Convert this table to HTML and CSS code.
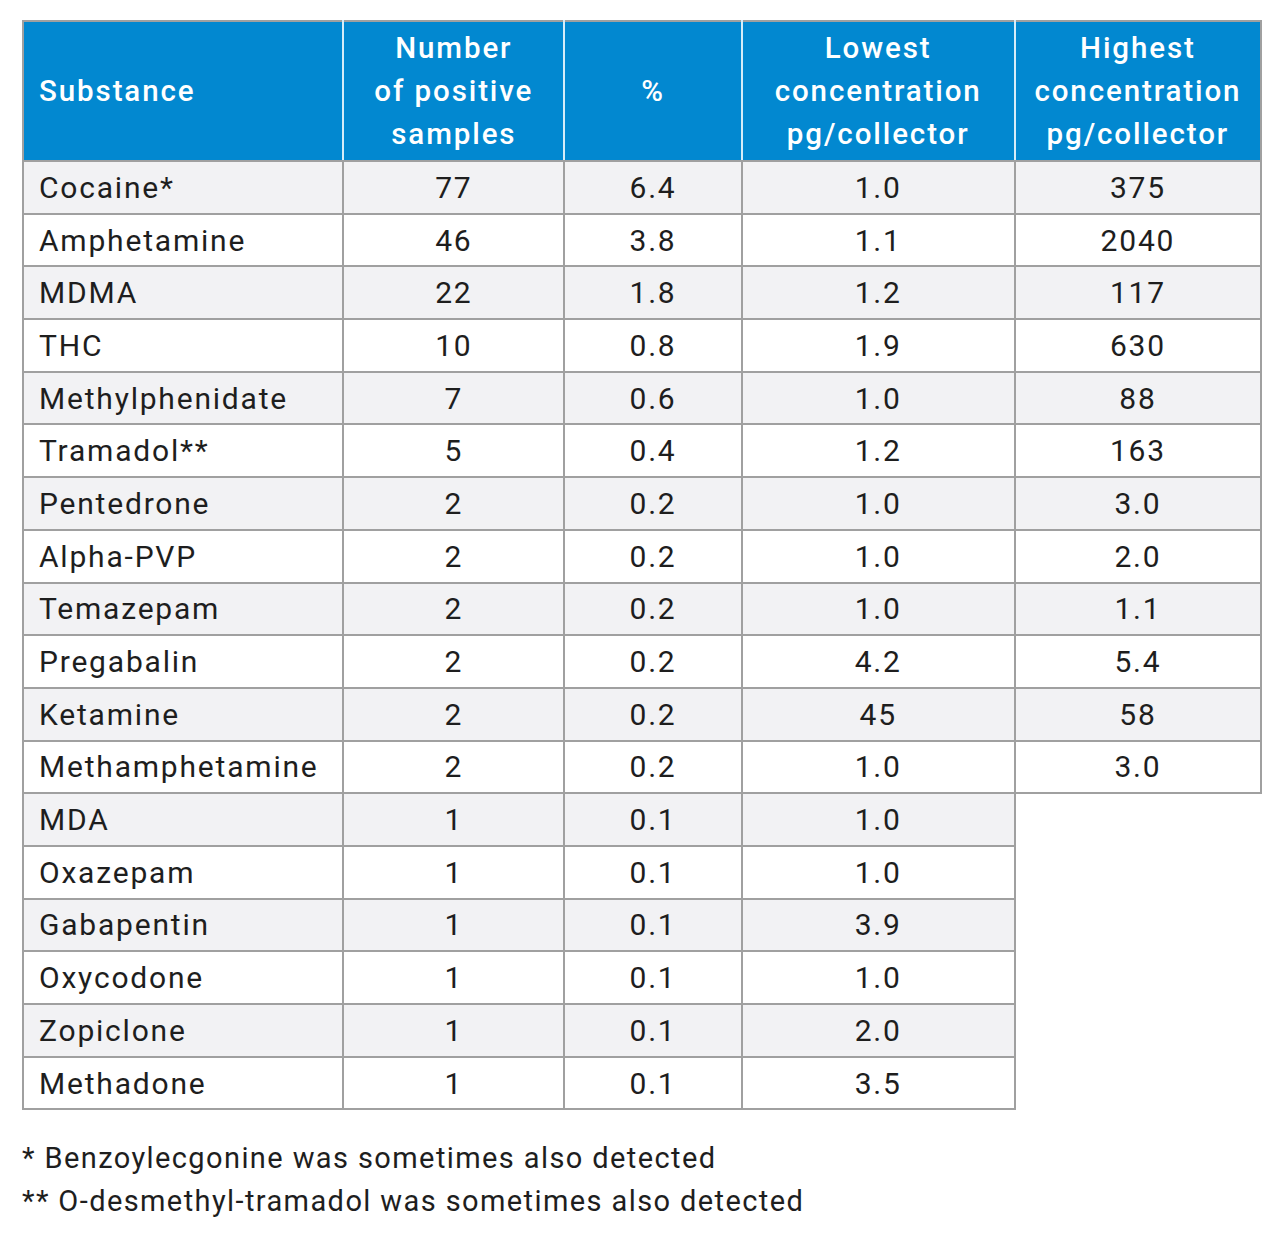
FILE: index.html
```html
<!DOCTYPE html>
<html>
<head>
<meta charset="utf-8">
<link rel="stylesheet" href="styles.css">
</head>
<body>
<div class="page">
<table class="data">
  <colgroup>
    <col class="c1"><col class="c2"><col class="c3"><col class="c4"><col class="c5">
  </colgroup>
  <thead>
    <tr>
      <th class="left">Substance</th>
      <th>Number<br>of positive<br>samples</th>
      <th>%</th>
      <th>Lowest<br>concentration<br>pg/collector</th>
      <th>Highest<br>concentration<br>pg/collector</th>
    </tr>
  </thead>
  <tbody>
    <tr class="odd"><td class="left">Cocaine*</td><td>77</td><td>6.4</td><td>1.0</td><td>375</td></tr>
    <tr><td class="left">Amphetamine</td><td>46</td><td>3.8</td><td>1.1</td><td>2040</td></tr>
    <tr class="odd"><td class="left">MDMA</td><td>22</td><td>1.8</td><td>1.2</td><td>117</td></tr>
    <tr><td class="left">THC</td><td>10</td><td>0.8</td><td>1.9</td><td>630</td></tr>
    <tr class="odd"><td class="left">Methylphenidate</td><td>7</td><td>0.6</td><td>1.0</td><td>88</td></tr>
    <tr><td class="left">Tramadol**</td><td>5</td><td>0.4</td><td>1.2</td><td>163</td></tr>
    <tr class="odd"><td class="left">Pentedrone</td><td>2</td><td>0.2</td><td>1.0</td><td>3.0</td></tr>
    <tr><td class="left">Alpha-PVP</td><td>2</td><td>0.2</td><td>1.0</td><td>2.0</td></tr>
    <tr class="odd"><td class="left">Temazepam</td><td>2</td><td>0.2</td><td>1.0</td><td>1.1</td></tr>
    <tr><td class="left">Pregabalin</td><td>2</td><td>0.2</td><td>4.2</td><td>5.4</td></tr>
    <tr class="odd"><td class="left">Ketamine</td><td>2</td><td>0.2</td><td>45</td><td>58</td></tr>
    <tr><td class="left">Methamphetamine</td><td>2</td><td>0.2</td><td>1.0</td><td>3.0</td></tr>
    <tr class="odd"><td class="left">MDA</td><td>1</td><td>0.1</td><td>1.0</td></tr>
    <tr><td class="left">Oxazepam</td><td>1</td><td>0.1</td><td>1.0</td></tr>
    <tr class="odd"><td class="left">Gabapentin</td><td>1</td><td>0.1</td><td>3.9</td></tr>
    <tr><td class="left">Oxycodone</td><td>1</td><td>0.1</td><td>1.0</td></tr>
    <tr class="odd"><td class="left">Zopiclone</td><td>1</td><td>0.1</td><td>2.0</td></tr>
    <tr><td class="left">Methadone</td><td>1</td><td>0.1</td><td>3.5</td></tr>
  </tbody>
</table>
<div class="notes">
  <p>* Benzoylecgonine was sometimes also detected</p>
  <p>** O-desmethyl-tramadol was sometimes also detected</p>
</div>
</div>
</body>
</html>
```

FILE: styles.css
```css
html, body {
  margin: 0;
  padding: 0;
  background: #ffffff;
}
body {
  font-family: Roboto, "Liberation Sans", Arial, sans-serif;
  color: #1e1e1e;
}
.page {
  padding: 20px 0 0 22px;
}
.data {
  border-collapse: collapse;
  table-layout: fixed;
  width: 1240px;
}
.c1 { width: 320px; }
.c2 { width: 221px; }
.c3 { width: 177px; }
.c4 { width: 273px; }
.c5 { width: 246px; }
.data th {
  background: #0288d0;
  color: #ffffff;
  font-weight: 500;
  font-size: 29.5px;
  line-height: 43px;
  letter-spacing: 1.9px;
  height: 138px;
  padding: 0 2px;
  text-align: center;
  vertical-align: middle;
  border: 2px solid #a0a0a0;
  border-left-color: #d6ecf8;
  border-right-color: #d6ecf8;
  border-bottom-color: #a0a0a0;
}
.data th:first-child { border-left-color: #a0a0a0; }
.data th:last-child { border-right-color: #a0a0a0; }
.data th.left { text-align: left; padding-left: 15px; }
.data td {
  border: 2px solid #a0a0a0;
  height: 50.7px;
  padding: 0 2px;
  font-size: 30px;
  letter-spacing: 1.8px;
  text-align: center;
  vertical-align: middle;
  background: #ffffff;
}
.data tr.odd td { background: #f2f2f4; }
.data td.left { text-align: left; padding-left: 15px; }
.notes {
  padding-top: 27px;
}
.notes p {
  margin: 0;
  font-size: 29px;
  line-height: 43px;
  letter-spacing: 1.4px;
}
```
